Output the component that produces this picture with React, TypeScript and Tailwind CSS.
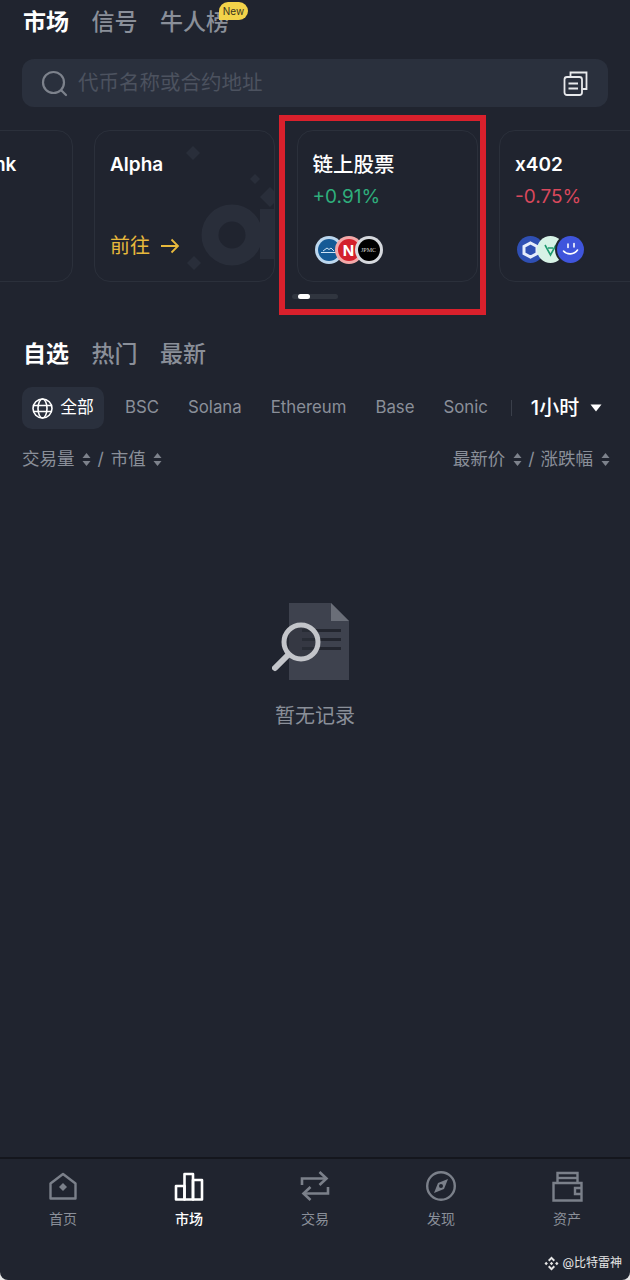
const font = 'font-["Inter","Noto_Sans_CJK_SC",sans-serif]'

function SortArrows() {
  return (
    <svg width="9" height="15" viewBox="0 0 9 15" className="shrink-0" fill="#7d828c">
      <path d="M4.5 1 L8.5 6 H0.5 Z" />
      <path d="M4.5 14 L8.5 9 H0.5 Z" />
    </svg>
  )
}

function Card({ children, className = '' }: { children: React.ReactNode; className?: string }) {
  return (
    <div className={`relative h-[152px] w-[181px] shrink-0 overflow-hidden rounded-[16px] border border-[#2b303b] pl-[15px] pt-[20px] ${className}`}>
      {children}
    </div>
  )
}

function StockLogos() {
  return (
    <div className="ml-[2px] mt-[26px] flex">
      <div className="flex h-[28px] w-[28px] items-center justify-center rounded-full bg-[#bcd7ee]">
        <div className="flex h-[22px] w-[22px] items-center justify-center rounded-full bg-[#155a96]">
          <svg width="17" height="8" viewBox="0 0 17 8" fill="none" stroke="#cfe3f5" strokeWidth="1">
            <path d="M1 6.5 H16 M3 5 L7 2 L9 3.5 L11 2 L14 5" />
          </svg>
        </div>
      </div>
      <div className="-ml-[8px] flex h-[28px] w-[28px] items-center justify-center rounded-full bg-[#f4a9a9]">
        <div className="flex h-[22px] w-[22px] items-center justify-center rounded-full bg-[#d3202c] text-[15px] font-bold leading-none text-white">N</div>
      </div>
      <div className="-ml-[8px] flex h-[28px] w-[28px] items-center justify-center rounded-full bg-[#d6d9de]">
        <div className="flex h-[22px] w-[22px] items-center justify-center rounded-full bg-black font-['Liberation_Serif',serif] text-[6px] leading-none text-[#d8d8d8]">JPMC</div>
      </div>
    </div>
  )
}

function CryptoLogos() {
  return (
    <div className="ml-[2px] mt-[26px] flex">
      <div className="flex h-[27px] w-[27px] items-center justify-center rounded-full bg-[#2f4fb3]">
        <svg width="17" height="18" viewBox="0 0 17 18" fill="none" stroke="#e6ecfb" strokeWidth="3">
          <path d="M8.5 2 L15 5.5 V12.5 L8.5 16 L2 12.5 V5.5 Z" />
        </svg>
      </div>
      <div className="-ml-[7px] flex h-[27px] w-[27px] items-center justify-center rounded-full bg-[#d7f2e6]">
        <svg width="15" height="15" viewBox="0 0 15 15" fill="none" stroke="#1f9a70" strokeWidth="1.6">
          <path d="M2 3 L7.5 13 L13 3 M5 6 H10" />
        </svg>
      </div>
      <div className="-ml-[7px] flex h-[27px] w-[27px] items-center justify-center rounded-full bg-[#3f55dc] ring-2 ring-[#20242f]">
        <svg width="19" height="17" viewBox="0 0 19 17" fill="none" stroke="#fff" strokeWidth="1.6" strokeLinecap="round">
          <path d="M7 3 V6.5 M13 2.5 V6" />
          <path d="M2.5 10 C6 14 13 14 16.5 9" />
        </svg>
      </div>
    </div>
  )
}

function HomeIcon() {
  return (
    <svg width="28" height="28" viewBox="0 0 28 28" fill="none" stroke="#7b808a" strokeWidth="2.4" strokeLinejoin="round">
      <path d="M14 2 L26.5 11.5 V26.5 H1.5 V11.5 Z" />
      <path d="M14 11 L18 15 L14 19 L10 15 Z" fill="#7b808a" stroke="none" />
    </svg>
  )
}

function MarketIcon() {
  return (
    <svg width="30" height="29" viewBox="0 0 30 29" fill="none" stroke="#ffffff" strokeWidth="2.6" strokeLinejoin="round">
      <path d="M2 14 H10.5 V27.5 H2 Z" />
      <path d="M10.5 2 H19 V27.5 H10.5 Z" />
      <path d="M19 8 H28 V27.5 H19 Z" />
    </svg>
  )
}

function TradeIcon() {
  return (
    <svg width="30" height="30" viewBox="0 0 30 30" fill="none" stroke="#7b808a" strokeWidth="2.6">
      <path d="M2 14 V7.5 H27" />
      <path d="M19.5 1 L26.5 7.5 L19.5 14" />
      <path d="M28 16 V22.5 H3" />
      <path d="M10.5 16 L3.5 22.5 L10.5 29" />
    </svg>
  )
}

function CompassIcon() {
  return (
    <svg width="30" height="30" viewBox="0 0 30 30" fill="none" stroke="#7b808a" strokeWidth="2.4">
      <circle cx="15" cy="15" r="13.8" />
      <path d="M22 8 L18 18 L8 22 L12 12 Z" fill="#7b808a" stroke="none" />
      <circle cx="15" cy="15" r="2" fill="#20242f" stroke="none" />
    </svg>
  )
}

function WalletIcon() {
  return (
    <svg width="31" height="31" viewBox="0 0 31 31" fill="none" stroke="#7b808a" strokeWidth="2.4">
      <path d="M1.5 12 H29.5 V29.5 H1.5 Z" />
      <path d="M5.5 12 V2 H25.5 V12" />
      <path d="M5.5 7 H25.5" />
      <path d="M29.5 17 H23 V23 H29.5" />
    </svg>
  )
}

const navItems = [
  { label: '首页', icon: <HomeIcon />, active: false },
  { label: '市场', icon: <MarketIcon />, active: true },
  { label: '交易', icon: <TradeIcon />, active: false },
  { label: '发现', icon: <CompassIcon />, active: false },
  { label: '资产', icon: <WalletIcon />, active: false },
]

export default function App() {
  return (
    <div className={`h-[1280px] w-[630px] overflow-hidden bg-[#e8e8e8] ${font}`}>
      <div className="relative flex h-[1280px] flex-col overflow-hidden rounded-b-[8px] bg-[#20242f]">
        {/* 顶部标签 */}
        <div className="flex h-[44px] items-center gap-[22.5px] pl-[23px] text-[23px] font-medium leading-none text-[#8a8f99]">
          <span className="font-semibold text-white">市场</span>
          <span>信号</span>
          <span className="relative">
            牛人榜
            <span className="absolute -right-[19px] -top-[9px] flex h-[18px] w-[29px] items-center justify-center rounded-[9px] rounded-bl-none bg-[#f3d34a] text-[10px] font-normal text-[#3a3520]">New</span>
          </span>
        </div>

        {/* 搜索 */}
        <div className="mx-[22px] mt-[15px] flex h-[48px] items-center rounded-[12px] bg-[#2a303d] pl-[19px] pr-[20px]">
          <svg width="27" height="27" viewBox="0 0 27 27" fill="none" stroke="#7d828c" strokeWidth="2.2" strokeLinecap="round">
            <circle cx="12.5" cy="12.5" r="10.5" />
            <path d="M20.5 20.5 L25 25" />
          </svg>
          <span className="ml-[10px] text-[20.5px] text-[#4c525f]">代币名称或合约地址</span>
          <svg className="ml-auto" width="25" height="25" viewBox="0 0 25 25" fill="none" stroke="#e8e9ec" strokeWidth="1.8">
            <path d="M7.5 5 V1.5 H23.5 V18 H19.5" />
            <rect x="1.5" y="6" width="17.5" height="18" rx="2.5" />
            <path d="M5.5 12.5 H15 M5.5 17.5 H15" />
          </svg>
        </div>

        {/* 卡片 */}
        <div className="mt-[23px] overflow-hidden">
          <div className="-ml-[108.5px] flex gap-[21.5px]">
            <Card>
              <div className="pl-[63px] text-[19px] font-semibold leading-[27px] text-white">Bank</div>
            </Card>
            <Card>
              <svg className="absolute left-[86px] top-[10px]" width="95" height="140" viewBox="0 0 95 140" fill="#292e3a">
                <path d="M12 5 L19 12 L12 19 L5 12 Z" />
                <path d="M74 33 L79 38 L74 43 L69 38 Z" />
                <path d="M13 115 L20 122 L13 129 L6 122 Z" />
                <path d="M89 46 L99 56 L89 66 L79 56 Z" />
                <circle cx="51" cy="94" r="22" fill="none" stroke="#292e3a" strokeWidth="17" />
                <rect x="79" y="68" width="16" height="50" />
              </svg>
              <div className="relative text-[19px] font-semibold leading-[27px] text-white">Alpha</div>
              <div className="relative mt-[54px] flex items-center gap-[10px] text-[20px] leading-[28px] text-[#e8b93c]">
                前往
                <svg width="20" height="16" viewBox="0 0 20 16" fill="none" stroke="#e8b93c" strokeWidth="1.8">
                  <path d="M1 8 H18 M11.5 1.5 L18 8 L11.5 14.5" />
                </svg>
              </div>
            </Card>
            <Card>
              <div className="text-[20.5px] font-medium leading-[27px] text-white">链上股票</div>
              <div className="mt-[6px] text-[19px] leading-[26px] text-[#2fae7c]">+0.91%</div>
              <StockLogos />
            </Card>
            <Card>
              <div className="text-[19px] font-semibold leading-[27px] text-white">x402</div>
              <div className="mt-[6px] text-[19px] leading-[26px] text-[#d9485c]">-0.75%</div>
              <CryptoLogos />
            </Card>
          </div>
          <div className="ml-[292px] mt-[12px] h-[5px] w-[46px] rounded-full bg-[#30353f] pl-[6px]">
            <div className="h-[5px] w-[12px] rounded-full bg-white" />
          </div>
        </div>

        {/* 红框标注 */}
        <div className="absolute left-[279px] top-[115px] h-[200px] w-[207px] border-[6px] border-[#d9202c]" />

        {/* 列表标签 */}
        <div className="mt-[40px] flex gap-[22.5px] pl-[23px] text-[23px] font-medium leading-[30px] text-[#8a8f99]">
          <span className="font-semibold text-white">自选</span>
          <span>热门</span>
          <span>最新</span>
        </div>

        {/* 链筛选 */}
        <div className="mt-[18px] flex h-[42px] items-center pl-[22px] text-[16.8px] text-[#8a8f99]">
          <div className="flex h-[42px] w-[82px] items-center justify-center gap-[7px] rounded-[10px] bg-[#2a303d] text-white">
            <svg width="21" height="21" viewBox="0 0 21 21" fill="none" stroke="#fff" strokeWidth="1.6">
              <circle cx="10.5" cy="10.5" r="9.5" />
              <ellipse cx="10.5" cy="10.5" rx="4.5" ry="9.5" />
              <path d="M1 7.5 H20 M1 13.5 H20" />
            </svg>
            全部
          </div>
          <span className="ml-[21px]">BSC</span>
          <span className="ml-[29px]">Solana</span>
          <span className="ml-[29px]">Ethereum</span>
          <span className="ml-[29px]">Base</span>
          <span className="ml-[29px]">Sonic</span>
          <span className="ml-[23px] h-[16px] w-px bg-[#3a3f4a]" />
          <span className="ml-[19px] text-[20px] font-medium text-white">1小时</span>
          <svg className="ml-[11px]" width="12" height="8" viewBox="0 0 12 8" fill="#fff">
            <path d="M0.5 0.5 H11.5 L6 7.5 Z" />
          </svg>
        </div>

        {/* 排序 */}
        <div className="mt-[17px] flex items-center justify-between pl-[22px] pr-[20px] text-[17.5px] leading-[26px] text-[#8a8f99]">
          <div className="flex items-center">
            交易量
            <span className="ml-[7px]"><SortArrows /></span>
            <span className="ml-[7px]">/</span>
            <span className="ml-[7px]">市值</span>
            <span className="ml-[7px]"><SortArrows /></span>
          </div>
          <div className="flex items-center">
            最新价
            <span className="ml-[8px]"><SortArrows /></span>
            <span className="ml-[6px]">/</span>
            <span className="ml-[6px]">涨跌幅</span>
            <span className="ml-[8px]"><SortArrows /></span>
          </div>
        </div>

        {/* 空状态 */}
        <div className="mt-[130px] flex flex-col items-center">
          <svg className="ml-[4px]" width="90" height="80" viewBox="0 0 90 80">
            <path d="M17 1 H59 L77 19 V78 H17 Z" fill="#3e424e" />
            <path d="M59 1 L77 19 H59 Z" fill="#6a6e78" />
            <path d="M30 27 H69 V30 H30 Z M30 36 H69 V39 H30 Z M30 45 H69 V48 H30 Z" fill="#23262f" />
            <circle cx="29" cy="40" r="17" fill="#2e313b" fillOpacity="0.55" stroke="#c3c5ca" strokeWidth="5" />
            <path d="M16 53 L3 66" stroke="#c3c5ca" strokeWidth="6" strokeLinecap="round" />
          </svg>
          <div className="mt-[20px] text-[20px] leading-[28px] text-[#8a8f99]">暂无记录</div>
        </div>

        {/* 底部导航 */}
        <div className="mt-auto h-[123px] border-t-2 border-[#14161d]">
          <div className="grid grid-cols-5 pt-[11px]">
            {navItems.map((item) => (
              <div key={item.label} className="flex flex-col items-center">
                <div className="flex h-[32px] items-center justify-center">{item.icon}</div>
                <span className={`mt-[6px] text-[14px] leading-[22px] ${item.active ? 'font-medium text-white' : 'text-[#8a8f99]'}`}>{item.label}</span>
              </div>
            ))}
          </div>
        </div>

        {/* 水印 */}
        <div className="absolute bottom-[5px] right-[8px] flex items-center gap-[3px] text-[12px] leading-[24px] text-[#e6e6e6]">
          <svg width="15" height="15" viewBox="0 0 15 15" fill="#e6e6e6">
            <path d="M7.5 0.5 L11 4 L9.6 5.4 L7.5 3.3 L5.4 5.4 L4 4 Z" />
            <path d="M7.5 14.5 L11 11 L9.6 9.6 L7.5 11.7 L5.4 9.6 L4 11 Z" />
            <path d="M2.2 5.8 L3.9 7.5 L2.2 9.2 L0.5 7.5 Z M12.8 5.8 L14.5 7.5 L12.8 9.2 L11.1 7.5 Z M7.5 5.8 L9.2 7.5 L7.5 9.2 L5.8 7.5 Z" />
          </svg>
          @比特雷神
        </div>
      </div>
    </div>
  )
}
